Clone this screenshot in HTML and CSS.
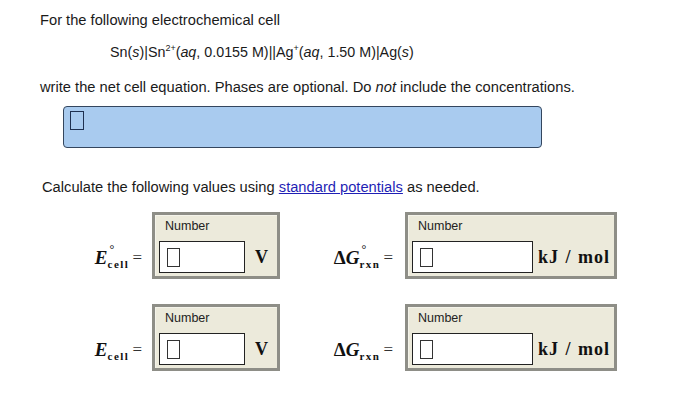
FILE: index.html
```html
<!DOCTYPE html>
<html>
<head>
<meta charset="utf-8">
<link rel="stylesheet" href="styles.css">
</head>
<body>
<div class="page">
  <p class="line l1">For the following electrochemical cell</p>
  <p class="line l2">Sn(<i>s</i>)|Sn<sup class="sp">2+</sup>(<i>aq</i>, 0.0155 M)||Ag<sup class="sp">+</sup>(<i>aq</i>, 1.50 M)|Ag(<i>s</i>)</p>
  <p class="line l3">write the net cell equation. Phases are optional. Do <i>not</i> include the concentrations.</p>
  <div class="answer"><span class="caret-box blue"></span></div>
  <p class="line l4">Calculate the following values using <a class="link" href="#">standard potentials</a> as needed.</p>

  <div class="row r1">
    <div class="lab lab1"><span class="sym">E</span><span class="idx"><span class="deg">°</span><span class="sub">cell</span></span><span class="eq">=</span></div>
    <div class="nbox nb1">
      <div class="nlabel">Number</div>
      <div class="nin"><div class="field f1"><span class="caret-box"></span></div><span class="unit u1">V</span></div>
    </div>
    <div class="lab lab2"><span class="sym"><span class="delta">Δ</span>G</span><span class="idx"><span class="deg">°</span><span class="sub">rxn</span></span><span class="eq">=</span></div>
    <div class="nbox nb2">
      <div class="nlabel">Number</div>
      <div class="nin"><div class="field f2"><span class="caret-box"></span></div><span class="unit u2">kJ / mol</span></div>
    </div>
  </div>

  <div class="row r2">
    <div class="lab lab1"><span class="sym">E</span><span class="idx"><span class="deg nodeg"></span><span class="sub">cell</span></span><span class="eq">=</span></div>
    <div class="nbox nb1">
      <div class="nlabel">Number</div>
      <div class="nin"><div class="field f1"><span class="caret-box"></span></div><span class="unit u1">V</span></div>
    </div>
    <div class="lab lab2"><span class="sym"><span class="delta">Δ</span>G</span><span class="idx"><span class="deg nodeg"></span><span class="sub">rxn</span></span><span class="eq">=</span></div>
    <div class="nbox nb2">
      <div class="nlabel">Number</div>
      <div class="nin"><div class="field f2"><span class="caret-box"></span></div><span class="unit u2">kJ / mol</span></div>
    </div>
  </div>
</div>
</body>
</html>
```

FILE: styles.css
```css
html, body {
  margin: 0;
  padding: 0;
  background: #ffffff;
}
.page {
  padding-top: 12px;
  font-family: "Liberation Sans", Arial, sans-serif;
  font-size: 14.7px;
  color: #1a1a1a;
}
.line {
  margin: 0;
  height: 16px;
  line-height: 16px;
  padding-left: 40px;
  white-space: nowrap;
}
.l2 {
  margin-top: 16px;
  padding-left: 110px;
  font-size: 14.3px;
}
.l3 {
  margin-top: 19px;
}
.l4 {
  margin-top: 31px;
  padding-left: 42px;
}
.sp {
  font-size: 9px;
  line-height: 0;
  vertical-align: 6px;
}
.link {
  color: #1f1fb5;
  text-decoration: underline;
}
.answer {
  margin: 11px 0 0 63px;
  width: 479px;
  height: 42px;
  background: #a9cbef;
  border: 1px solid #34465e;
  border-radius: 4px;
  padding: 4px 0 0 6px;
  box-sizing: border-box;
}
.caret-box {
  display: block;
  width: 13px;
  height: 19px;
  border: 1px solid #333;
  box-sizing: border-box;
  background: #fff;
}
.caret-box.blue {
  background: transparent;
  border-color: #1e3050;
  width: 14px;
  height: 19px;
}
.row {
  display: flex;
  align-items: stretch;
  padding-left: 80px;
}
.r1 {
  margin-top: 17px;
}
.r2 {
  margin-top: 25px;
}
.lab {
  display: flex;
  align-items: center;
  justify-content: flex-end;
  padding-top: 24px;
  font-family: "Liberation Serif", "Times New Roman", serif;
  color: #111;
}
.lab1 {
  width: 62px;
  padding-right: 10px;
}
.lab2 {
  width: 113px;
  padding-right: 12px;
}
.sym {
  font-weight: bold;
  font-style: italic;
  font-size: 19px;
}
.delta {
  font-style: normal;
}
.idx {
  display: flex;
  flex-direction: column;
  align-items: flex-start;
  font-weight: bold;
  margin-left: 0;
}
.deg {
  font-size: 12px;
  line-height: 8px;
  height: 8px;
  font-weight: normal;
  padding-left: 2px;
}
.sub {
  font-size: 11px;
  line-height: 12px;
  letter-spacing: 1.5px;
  margin-top: 5px;
}
.eq {
  font-size: 17px;
  margin-left: 3px;
  color: #333;
}
.nbox {
  border: 3px solid #8e8e87;
  box-shadow: inset 1px 1px 0 #f4f3ea;
  background: #eceadb;
  padding: 4px 4px 3px 4px;
}
.nb1 {
  width: 128px;
  box-sizing: border-box;
}
.nb2 {
  width: 212px;
  box-sizing: border-box;
}
.nlabel {
  font-size: 12.5px;
  line-height: 14px;
  height: 14px;
  padding-left: 6px;
  margin-bottom: 8px;
  color: #222;
}
.nin {
  display: flex;
  align-items: center;
}
.field {
  height: 32px;
  background: #fff;
  border: 1px solid #222;
  box-sizing: border-box;
  padding: 6px 0 0 7px;
}
.f1 {
  width: 86px;
}
.f2 {
  width: 121px;
}
.unit {
  font-family: "Liberation Serif", "Times New Roman", serif;
  font-weight: bold;
  font-size: 18px;
  color: #111;
}
.u1 {
  margin-left: 10px;
}
.u2 {
  margin-left: 5px;
  letter-spacing: 1px;
  word-spacing: 1px;
}
```
